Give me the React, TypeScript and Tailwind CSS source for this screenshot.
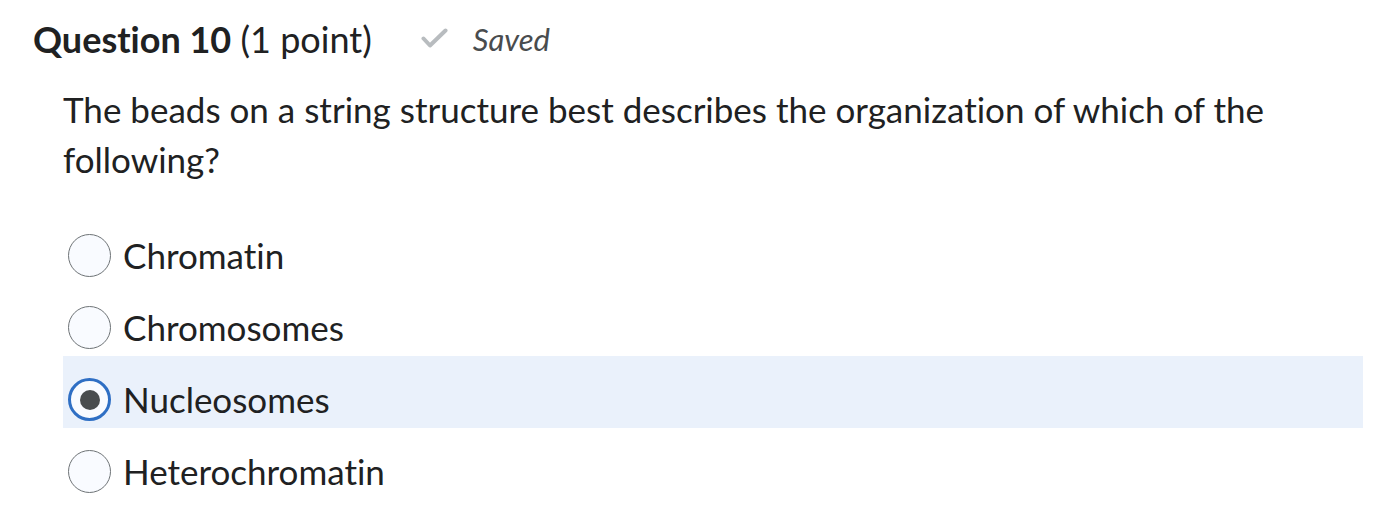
import React, { useState } from 'react';

const OPTIONS = ['Chromatin', 'Chromosomes', 'Nucleosomes', 'Heterochromatin'];

export default function App() {
  const [selected, setSelected] = useState(2);

  return (
    <div className="w-[1380px] h-[524px] bg-white text-[#202122] font-['Lato','Noto_Sans',sans-serif] [font-variant-ligatures:none] overflow-hidden">
      <div className="pl-[33px] pt-[16px]">
        <div className="flex items-center h-[46px]">
          <h2 className="text-[36px] leading-none">
            <span className="font-bold">Question 10</span> <span>(1 point)</span>
          </h2>
          <div className="flex items-center ml-[49px] text-[#494c4e]">
            <svg width="27" height="22" viewBox="0 0 27 22" className="mr-[25px]">
              <path d="M2.5 10.5 L9 17.5 L24.5 2.5" fill="none" stroke="#b8bcbf" strokeWidth="4" strokeLinecap="round" strokeLinejoin="round" />
            </svg>
            <span className="italic text-[31px]">Saved</span>
          </div>
        </div>
      </div>

      <div className="pl-[63px] mt-[22px]">
        <p className="text-[35px] leading-[50px] w-[1300px]">
          The beads on a string structure best describes the organization of which of the following?
        </p>

        <div className="mt-[28px] w-[1300px]">
          {OPTIONS.map((opt, i) => {
            const isSel = i === selected;
            return (
              <label
                key={opt}
                onClick={() => setSelected(i)}
                className={`flex items-center h-[72px] pt-[15px] cursor-pointer ${isSel ? 'bg-[#eaf1fb]' : ''}`}
              >
                <span
                  className={`ml-[5px] w-[43px] h-[43px] rounded-full flex items-center justify-center bg-[#f9fbff] ${
                    isSel ? 'border-[3px] border-[#2f6fc4]' : 'border-[1.5px] border-[#6e7376]'
                  }`}
                >
                  {isSel && <span className="w-[20px] h-[20px] rounded-full bg-[#494c4e]" />}
                </span>
                <span className="ml-[12px] text-[35px]">{opt}</span>
              </label>
            );
          })}
        </div>
      </div>
    </div>
  );
}
